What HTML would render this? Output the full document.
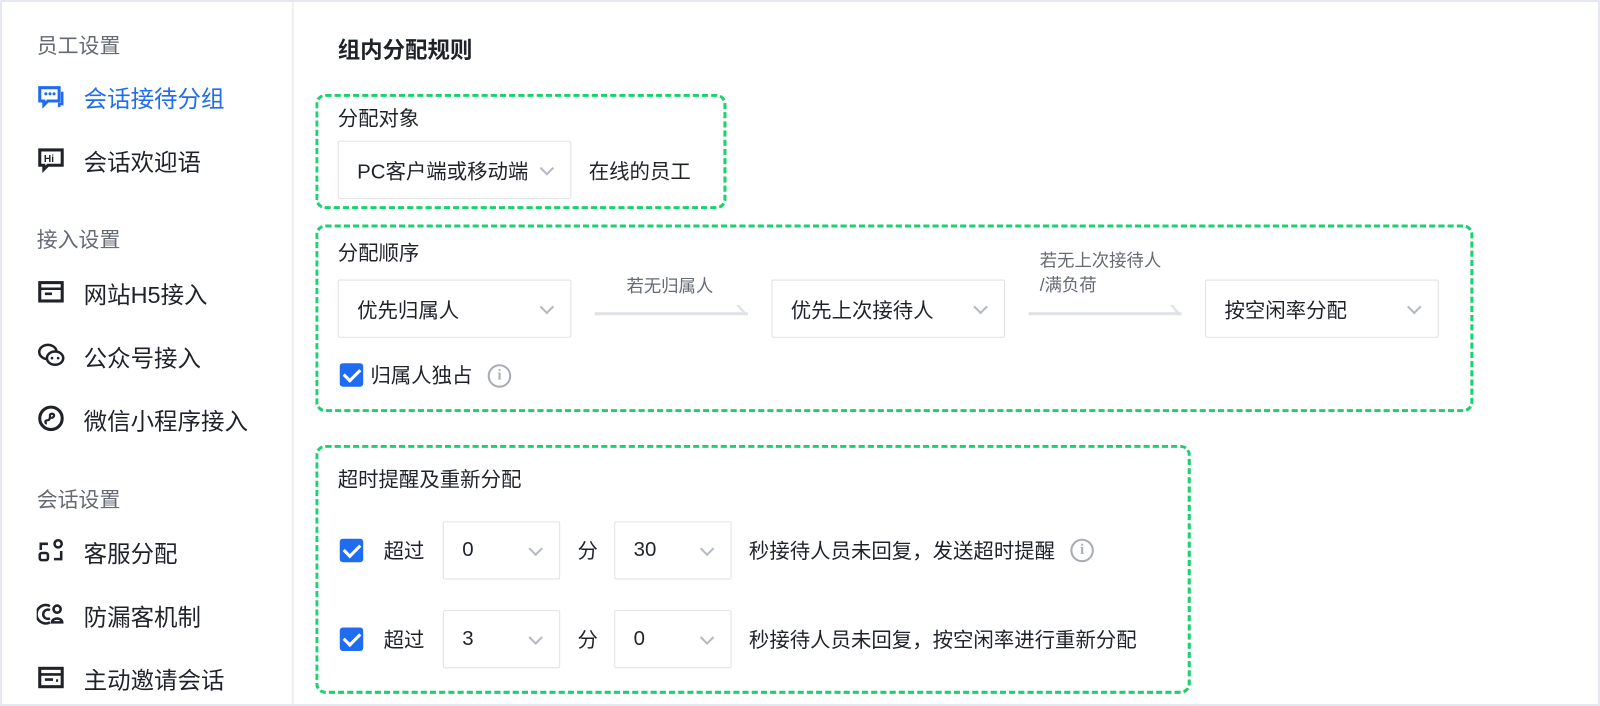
<!DOCTYPE html>
<html><head><meta charset="utf-8"><style>
*{margin:0;padding:0;box-sizing:border-box}
body{width:1600px;height:706px;background:#e6e8ef;font-family:"Liberation Sans","Noto Sans CJK SC",sans-serif;color:#1f2329;position:relative;overflow:hidden}
.frame{position:absolute;left:2px;top:2px;width:1564px;height:688px;background:#fff;transform:scale(1.0204);transform-origin:0 0}
.side{position:absolute;left:0;top:0;width:286px;height:688px;border-right:2px solid #eef0f4}
.a{position:absolute;white-space:nowrap}
.h{font-size:20.5px;color:#646a73;left:34px}
.it{font-size:23px;left:80px}
.ic{position:absolute;left:34px;width:28px;height:28px}
.dash{position:absolute;border:3px dashed #19d26e;border-radius:10px}
.sel{position:absolute;border:1px solid #dfe2e8;border-radius:2px;background:#fff;font-size:20px;padding-left:18px;display:flex;align-items:center}
.sel::after{content:"";position:absolute;right:18px;top:50%;width:8px;height:8px;border-right:2px solid #b5b9c2;border-bottom:2px solid #b5b9c2;transform:translateY(-70%) rotate(45deg)}
.t{font-size:20px}
.r{font-size:20px}
.cb{position:absolute;width:23px;height:23px;background:#1f6cf0;border-radius:3px}
.cb::after{content:"";position:absolute;left:7px;top:2px;width:7px;height:13px;border-right:3px solid #fff;border-bottom:3px solid #fff;transform:rotate(45deg)}
.info{position:absolute;width:23px;height:23px;border:2px solid #a8acb4;border-radius:50%;color:#a8acb4;font-size:14px;font-weight:bold;text-align:center;line-height:19px;font-family:"Liberation Serif",serif}
.arr{position:absolute;height:3px;background:#dfe2e8}
.arr::after{content:"";position:absolute;right:0;top:-7px;width:3px;height:10px;background:#dfe2e8;transform:skewX(40deg);transform-origin:bottom}
.sm{font-size:17px;color:#646a73}
</style></head><body>
<div class="frame">
<div class="side">
<div class="a h" style="top:26px">员工设置</div>
<svg class="ic" style="top:79px" viewBox="0 0 28 28"><path d="M3 5h19v13H11l-4 4v-4H3z" fill="none" stroke="#1f6cf0" stroke-width="3"/><path d="M25 9v12h-3v3" fill="none" stroke="#1f6cf0" stroke-width="2.5"/><circle cx="9" cy="11" r="1.5" fill="#1f6cf0"/><circle cx="13" cy="11" r="1.5" fill="#1f6cf0"/><circle cx="17" cy="11" r="1.5" fill="#1f6cf0"/></svg>
<div class="a it" style="top:76px;color:#1f6cf0">会话接待分组</div>
<svg class="ic" style="top:141px" viewBox="0 0 28 28"><path d="M3 4h22v15H11l-4 4v-4H3z" fill="none" stroke="#1f2329" stroke-width="3"/><text x="7" y="16" font-size="10" font-weight="bold" fill="#1f2329" font-family="Liberation Sans">Hi</text></svg>
<div class="a it" style="top:138px">会话欢迎语</div>
<div class="a h" style="top:216px">接入设置</div>
<svg class="ic" style="top:270px" viewBox="0 0 28 28"><rect x="3" y="5" width="22" height="18" fill="none" stroke="#1f2329" stroke-width="3"/><path d="M3 11h22M8 16h7" stroke="#1f2329" stroke-width="2.5"/></svg>
<div class="a it" style="top:268px">网站H5接入</div>
<svg class="ic" style="top:332px" viewBox="0 0 28 28"><ellipse cx="11" cy="11" rx="8.5" ry="7" fill="none" stroke="#1f2329" stroke-width="2.5"/><ellipse cx="18" cy="17" rx="8" ry="6.5" fill="#fff" stroke="#1f2329" stroke-width="2.5"/><circle cx="15" cy="17" r="1.3" fill="#1f2329"/><circle cx="21" cy="17" r="1.3" fill="#1f2329"/></svg>
<div class="a it" style="top:330px">公众号接入</div>
<svg class="ic" style="top:394px" viewBox="0 0 28 28"><circle cx="14" cy="14" r="11" fill="none" stroke="#1f2329" stroke-width="3"/><path d="M10 19c-2 0-2-3 0-3s3-1 3-3V11c0-2 4-2 4 0s-2 3-3 2" fill="none" stroke="#1f2329" stroke-width="2.2"/></svg>
<div class="a it" style="top:392px">微信小程序接入</div>
<div class="a h" style="top:471px">会话设置</div>
<svg class="ic" style="top:524px" viewBox="0 0 28 28"><rect x="3" y="16" width="8" height="7" rx="2" fill="none" stroke="#1f2329" stroke-width="2.5"/><circle cx="21" cy="7" r="3.5" fill="none" stroke="#1f2329" stroke-width="2.5"/><path d="M4 13V7h7M24 14v8h-7" fill="none" stroke="#1f2329" stroke-width="2.5"/></svg>
<div class="a it" style="top:522px">客服分配</div>
<svg class="ic" style="top:586px" viewBox="0 0 28 28"><path d="M13 6a9 9 0 1 0 0 16" fill="none" stroke="#1f2329" stroke-width="2.5"/><path d="M13 10a4.5 4.5 0 1 0 0 8" fill="none" stroke="#1f2329" stroke-width="2.5"/><circle cx="20" cy="9" r="3.5" fill="none" stroke="#1f2329" stroke-width="2.5"/><path d="M15 22c0-5 10-5 10 0z" fill="none" stroke="#1f2329" stroke-width="2.5"/></svg>
<div class="a it" style="top:584px">防漏客机制</div>
<svg class="ic" style="top:648px" viewBox="0 0 28 28"><rect x="3" y="5" width="22" height="18" fill="none" stroke="#1f2329" stroke-width="3"/><path d="M3 11h22M8 16h8M19 17h2" stroke="#1f2329" stroke-width="2.5"/></svg>
<div class="a it" style="top:646px">主动邀请会话</div>
</div>

<div class="a" style="left:329px;top:30px;font-size:22px;font-weight:bold">组内分配规则</div>

<div class="dash" style="left:307px;top:90px;width:403px;height:113px"></div>
<div class="a t" style="left:329px;top:98px">分配对象</div>
<div class="sel" style="left:329px;top:136px;width:229px;height:57px">PC客户端或移动端</div>
<div class="a t" style="left:575px;top:150px">在线的员工</div>

<div class="dash" style="left:307px;top:218px;width:1135px;height:184px"></div>
<div class="a t" style="left:329px;top:230px">分配顺序</div>
<div class="sel" style="left:329px;top:272px;width:229px;height:57px">优先归属人</div>
<div class="a sm" style="left:612px;top:264px">若无归属人</div>
<div class="arr" style="left:581px;top:304px;width:150px"></div>
<div class="sel" style="left:754px;top:272px;width:229px;height:57px">优先上次接待人</div>
<div class="a sm" style="left:1017px;top:242px;line-height:24px">若无上次接待人<br>/满负荷</div>
<div class="arr" style="left:1006px;top:304px;width:150px"></div>
<div class="sel" style="left:1179px;top:272px;width:229px;height:57px">按空闲率分配</div>
<div class="cb" style="left:331px;top:354px"></div>
<div class="a t" style="left:361px;top:350px">归属人独占</div>
<div class="info" style="left:476px;top:355px">i</div>

<div class="dash" style="left:307px;top:434px;width:858px;height:244px"></div>
<div class="a t" style="left:329px;top:452px">超时提醒及重新分配</div>
<div class="cb" style="left:331px;top:526px"></div>
<div class="a r" style="left:374px;top:522px">超过</div>
<div class="sel" style="left:432px;top:509px;width:115px;height:57px">0</div>
<div class="a r" style="left:564px;top:522px">分</div>
<div class="sel" style="left:600px;top:509px;width:115px;height:57px">30</div>
<div class="a r" style="left:732px;top:522px">秒接待人员未回复，发送超时提醒</div>
<div class="info" style="left:1047px;top:526px">i</div>
<div class="cb" style="left:331px;top:613px"></div>
<div class="a r" style="left:374px;top:609px">超过</div>
<div class="sel" style="left:432px;top:596px;width:115px;height:57px">3</div>
<div class="a r" style="left:564px;top:609px">分</div>
<div class="sel" style="left:600px;top:596px;width:115px;height:57px">0</div>
<div class="a r" style="left:732px;top:609px">秒接待人员未回复，按空闲率进行重新分配</div>
</div>
</body></html>
